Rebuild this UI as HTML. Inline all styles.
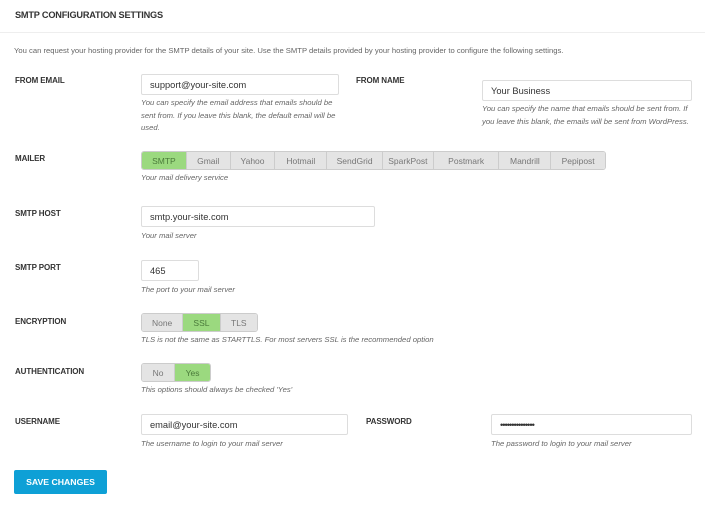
<!DOCTYPE html><html><head><style>
body{margin:0;width:705px;height:513px;background:#fff;font-family:"Liberation Sans",sans-serif;position:relative;overflow:hidden;color:#444}
.a{position:absolute;white-space:nowrap}
.h{font-weight:bold;font-size:9.2px;color:#333;letter-spacing:-.2px}
.lbl{font-weight:bold;font-size:8px;color:#333;letter-spacing:-.1px}
.d{font-style:italic;font-size:7.7px;color:#666;line-height:12.5px}
.in{position:absolute;box-sizing:border-box;border:1px solid #ddd;border-radius:2px;font-size:9.3px;color:#333;padding-left:8px;display:flex;align-items:center}
.seg{position:absolute;display:flex;border:1px solid #ccc;border-radius:3px;overflow:hidden;box-sizing:border-box}
.seg span{background:#e4e4e4;color:#777;font-size:8.5px;display:flex;align-items:center;justify-content:center;border-right:1px solid #ccc;box-sizing:border-box}
.seg span:last-child{border-right:0}
.seg .on{background:#9bd97f;color:#4a7a3a}
</style></head><body>
<div class="a h" style="left:15px;top:10px">SMTP CONFIGURATION SETTINGS</div>
<div class="a" style="left:0;top:32px;width:705px;height:1px;background:#eee"></div>
<div class="a" style="left:14px;top:46px;font-size:7.65px;color:#666">You can request your hosting provider for the SMTP details of your site. Use the SMTP details provided by your hosting provider to configure the following settings.</div>

<div class="a lbl" style="left:15px;top:76px">FROM EMAIL</div>
<div class="in" style="left:141px;top:74px;width:198px;height:21px">support@your-site.com</div>
<div class="a d" style="left:141px;top:97px">You can specify the email address that emails should be<br>sent from. If you leave this blank, the default email will be<br>used.</div>
<div class="a lbl" style="left:356px;top:76px">FROM NAME</div>
<div class="in" style="left:482px;top:80px;width:210px;height:21px">Your Business</div>
<div class="a d" style="left:482px;top:103px">You can specify the name that emails should be sent from. If<br>you leave this blank, the emails will be sent from WordPress.</div>

<div class="a lbl" style="left:15px;top:154px">MAILER</div>
<div class="seg" style="left:141px;top:151px;height:19px;width:465px">
<span class="on" style="width:45px">SMTP</span><span style="width:44px">Gmail</span><span style="width:45px">Yahoo</span><span style="width:52px">Hotmail</span><span style="width:56px">SendGrid</span><span style="width:51px">SparkPost</span><span style="width:66px">Postmark</span><span style="width:52px">Mandrill</span><span style="width:54px">Pepipost</span></div>
<div class="a d" style="left:141px;top:172px">Your mail delivery service</div>

<div class="a lbl" style="left:15px;top:209px">SMTP HOST</div>
<div class="in" style="left:141px;top:206px;width:234px;height:21px">smtp.your-site.com</div>
<div class="a d" style="left:141px;top:230px">Your mail server</div>

<div class="a lbl" style="left:15px;top:263px">SMTP PORT</div>
<div class="in" style="left:141px;top:260px;width:58px;height:21px">465</div>
<div class="a d" style="left:141px;top:284px">The port to your mail server</div>

<div class="a lbl" style="left:15px;top:317px">ENCRYPTION</div>
<div class="seg" style="left:141px;top:313px;height:19px;width:117px">
<span style="width:42px">None</span><span class="on" style="width:38px">SSL</span><span style="width:37px">TLS</span></div>
<div class="a d" style="left:141px;top:334px">TLS is not the same as STARTTLS. For most servers SSL is the recommended option</div>

<div class="a lbl" style="left:15px;top:367px">AUTHENTICATION</div>
<div class="seg" style="left:141px;top:363px;height:19px;width:70px">
<span style="width:34px">No</span><span class="on" style="width:36px">Yes</span></div>
<div class="a d" style="left:141px;top:384px">This options should always be checked 'Yes'</div>

<div class="a lbl" style="left:15px;top:417px">USERNAME</div>
<div class="in" style="left:141px;top:414px;width:207px;height:21px">email@your-site.com</div>
<div class="a d" style="left:141px;top:438px">The username to login to your mail server</div>
<div class="a lbl" style="left:366px;top:417px">PASSWORD</div>
<div class="in" style="left:491px;top:414px;width:201px;height:21px;letter-spacing:-1px">•••••••••••••••</div>
<div class="a d" style="left:491px;top:438px">The password to login to your mail server</div>

<div class="a" style="left:14px;top:470px;width:93px;height:24px;background:#0ea0d6;border-radius:2px;color:#fff;font-weight:bold;font-size:8.7px;display:flex;align-items:center;justify-content:center">SAVE CHANGES</div>
</body></html>
